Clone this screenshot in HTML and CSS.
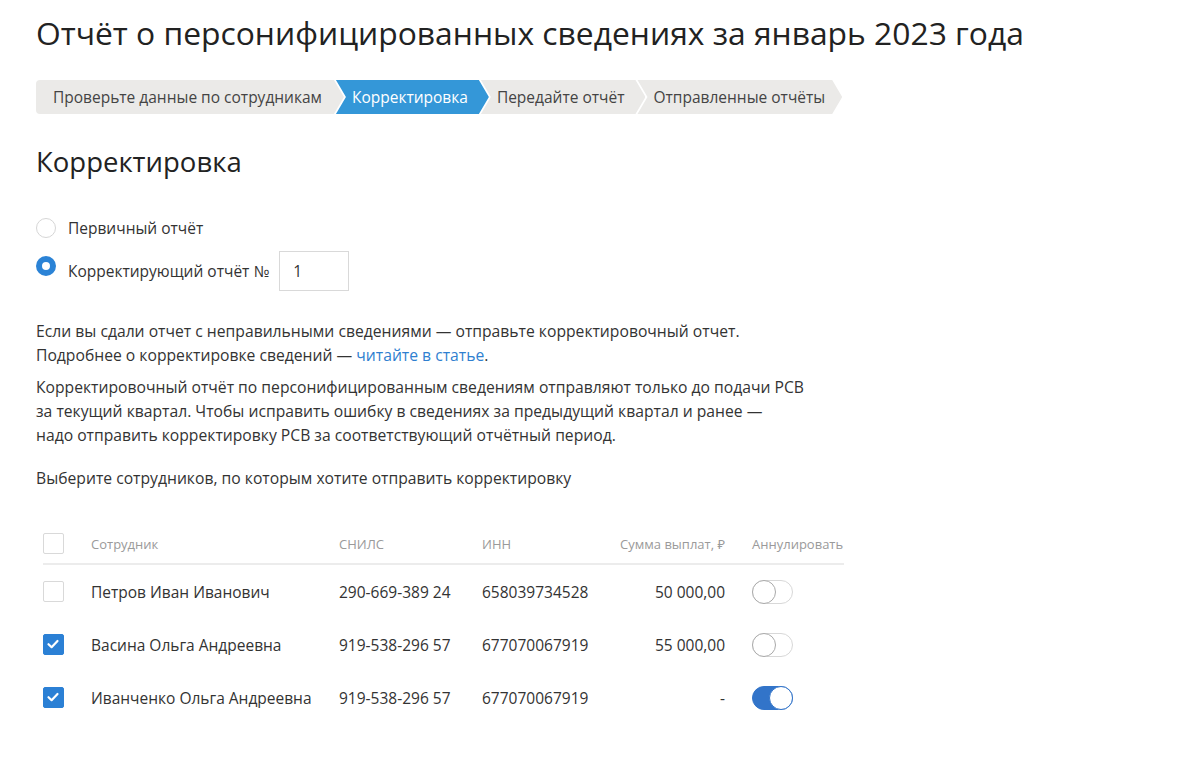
FILE: index.html
```html
<!DOCTYPE html>
<html lang="ru">
<head>
<meta charset="utf-8">
<link rel="stylesheet" href="styles.css">
</head>
<body>
<div class="page">
  <h1 class="title">Отчёт о персонифицированных сведениях за январь 2023 года</h1>
  <nav class="steps">
    <div class="step step-first">Проверьте данные по сотрудникам</div>
    <div class="step step-active">Корректировка</div>
    <div class="step">Передайте отчёт</div>
    <div class="step step-last">Отправленные отчёты</div>
  </nav>
  <h2 class="subtitle">Корректировка</h2>
  <div class="radios">
    <label class="radio-row"><span class="radio"></span><span class="radio-label">Первичный отчёт</span></label>
    <label class="radio-row radio-row-2"><span class="radio radio-on"></span><span class="radio-label">Корректирующий отчёт №</span><span class="num-input">1</span></label>
  </div>
  <p class="text">Если вы сдали отчет с неправильными сведениями — отправьте корректировочный отчет.<br>Подробнее о корректировке сведений — <a class="link" href="#">читайте в статье</a>.</p>
  <p class="text text-2">Корректировочный отчёт по персонифицированным сведениям отправляют только до подачи РСВ<br>за текущий квартал. Чтобы исправить ошибку в сведениях за предыдущий квартал и ранее —<br>надо отправить корректировку РСВ за соответствующий отчётный период.</p>
  <p class="text text-3">Выберите сотрудников, по которым хотите отправить корректировку</p>
  <div class="table">
    <div class="row head">
      <div class="cell"><span class="cb"></span></div>
      <div class="cell">Сотрудник</div>
      <div class="cell">СНИЛС</div>
      <div class="cell">ИНН</div>
      <div class="cell right">Сумма выплат, ₽</div>
      <div class="cell pad">Аннулировать</div>
    </div>
    <div class="row">
      <div class="cell"><span class="cb"></span></div>
      <div class="cell">Петров Иван Иванович</div>
      <div class="cell">290-669-389 24</div>
      <div class="cell">658039734528</div>
      <div class="cell right">50 000,00</div>
      <div class="cell pad"><span class="toggle"></span></div>
    </div>
    <div class="row">
      <div class="cell"><span class="cb cb-on"><svg viewBox="0 0 20 20" width="20" height="20"><path d="M5.5 10.2 L8.6 13.2 L14.5 7" fill="none" stroke="#fff" stroke-width="2.2" stroke-linecap="round" stroke-linejoin="round"/></svg></span></div>
      <div class="cell">Васина Ольга Андреевна</div>
      <div class="cell">919-538-296 57</div>
      <div class="cell">677070067919</div>
      <div class="cell right">55 000,00</div>
      <div class="cell pad"><span class="toggle"></span></div>
    </div>
    <div class="row">
      <div class="cell"><span class="cb cb-on"><svg viewBox="0 0 20 20" width="20" height="20"><path d="M5.5 10.2 L8.6 13.2 L14.5 7" fill="none" stroke="#fff" stroke-width="2.2" stroke-linecap="round" stroke-linejoin="round"/></svg></span></div>
      <div class="cell">Иванченко Ольга Андреевна</div>
      <div class="cell">919-538-296 57</div>
      <div class="cell">677070067919</div>
      <div class="cell right">-</div>
      <div class="cell pad"><span class="toggle toggle-on"></span></div>
    </div>
  </div>
</div>
</body>
</html>
```
FILE: styles.css
```css
* { box-sizing: border-box; }
html, body { margin: 0; padding: 0; background: #fff; }
body {
  font-family: "Open Sans", "Noto Sans", sans-serif;
  color: #333;
}
.page { padding: 12px 36px 0 36px; }
.title {
  margin: 0;
  font-size: 31.8px;
  font-weight: 400;
  line-height: 42px;
  color: #222;
}
.steps {
  display: flex;
  margin-top: 26px;
  height: 34px;
}
.step {
  height: 34px;
  line-height: 34px;
  background: #ebeae8;
  font-size: 15.5px;
  color: #444;
  padding: 0 21px 0 16px;
  margin-left: -8px;
  clip-path: polygon(0 0, calc(100% - 10px) 0, 100% 50%, calc(100% - 10px) 100%, 0 100%, 10px 50%);
  white-space: nowrap;
}
.step-first {
  margin-left: 0;
  padding-left: 17px;
  padding-right: 22px;
  border-radius: 4px 0 0 4px;
  clip-path: polygon(0 0, calc(100% - 10px) 0, 100% 50%, calc(100% - 10px) 100%, 0 100%);
}
.step-last { padding-right: 17px; }
.step-active { background: #3497d8; color: #fff; }
.subtitle {
  margin: 30px 0 0 0;
  font-size: 27.5px;
  font-weight: 400;
  line-height: 36px;
  color: #222;
}
.radios { margin-top: 30px; display: flex; flex-direction: column; gap: 5px; }
.radio-row { display: flex; align-items: center; height: 36px; font-size: 15.5px; }
.radio-row-2 { height: 40px; }
.radio {
  width: 20px; height: 20px; border-radius: 50%;
  border: 1px solid #d6d6d6;
  background: #fff;
  margin-right: 12px;
  flex: none;
}
.radio-on {
  border: 6px solid #2b83d6;
  position: relative;
  top: -5px;
}
.radio-label { color: #333; }
.num-input {
  display: inline-block;
  margin-left: 10px;
  width: 70px; height: 40px;
  border: 1px solid #d9d9d9;
  line-height: 38px;
  padding-left: 13px;
  font-size: 15.5px;
}
.text {
  margin: 28px 0 0 0;
  font-size: 15.7px;
  line-height: 24px;
  color: #333;
}
.text-2 { margin-top: 8px; }
.text-3 { margin-top: 19px; }
.link { color: #2f7fd0; text-decoration: none; }
.table { margin-top: 34px; margin-left: 7px; width: 801px; }
.row {
  display: grid;
  grid-template-columns: 48px 248px 143px 120px 123px 119px;
  height: 53px;
  align-items: center;
  font-size: 15.5px;
  color: #333;
}
.row.head {
  height: 41px;
  font-size: 13px;
  color: #9a9a9a;
  border-bottom: 2px solid #ececec;
}
.cell { white-space: nowrap; }
.right { text-align: right; }
.pad { padding-left: 27px; }
.cb {
  display: block;
  width: 21px; height: 21px;
  border: 1px solid #d9d9d9;
  border-radius: 2px;
  background: #fff;
}
.cb-on { background: #2b80d5; border-color: #2b80d5; }
.cb-on svg { display: block; margin: -1px; }
.toggle {
  display: block;
  width: 41px; height: 24px;
  border-radius: 12px;
  border: 1px solid #d8d8d8;
  position: relative;
  background: #fff;
}
.toggle::after {
  content: "";
  position: absolute;
  left: -1px; top: -1px;
  width: 24px; height: 24px;
  border-radius: 50%;
  border: 1.5px solid #a9a9a9;
  background: #fff;
  box-sizing: border-box;
}
.toggle-on { background: #3274c9; border-color: #3274c9; }
.toggle-on::after { left: auto; right: -1px; border-color: #3274c9; }
```
